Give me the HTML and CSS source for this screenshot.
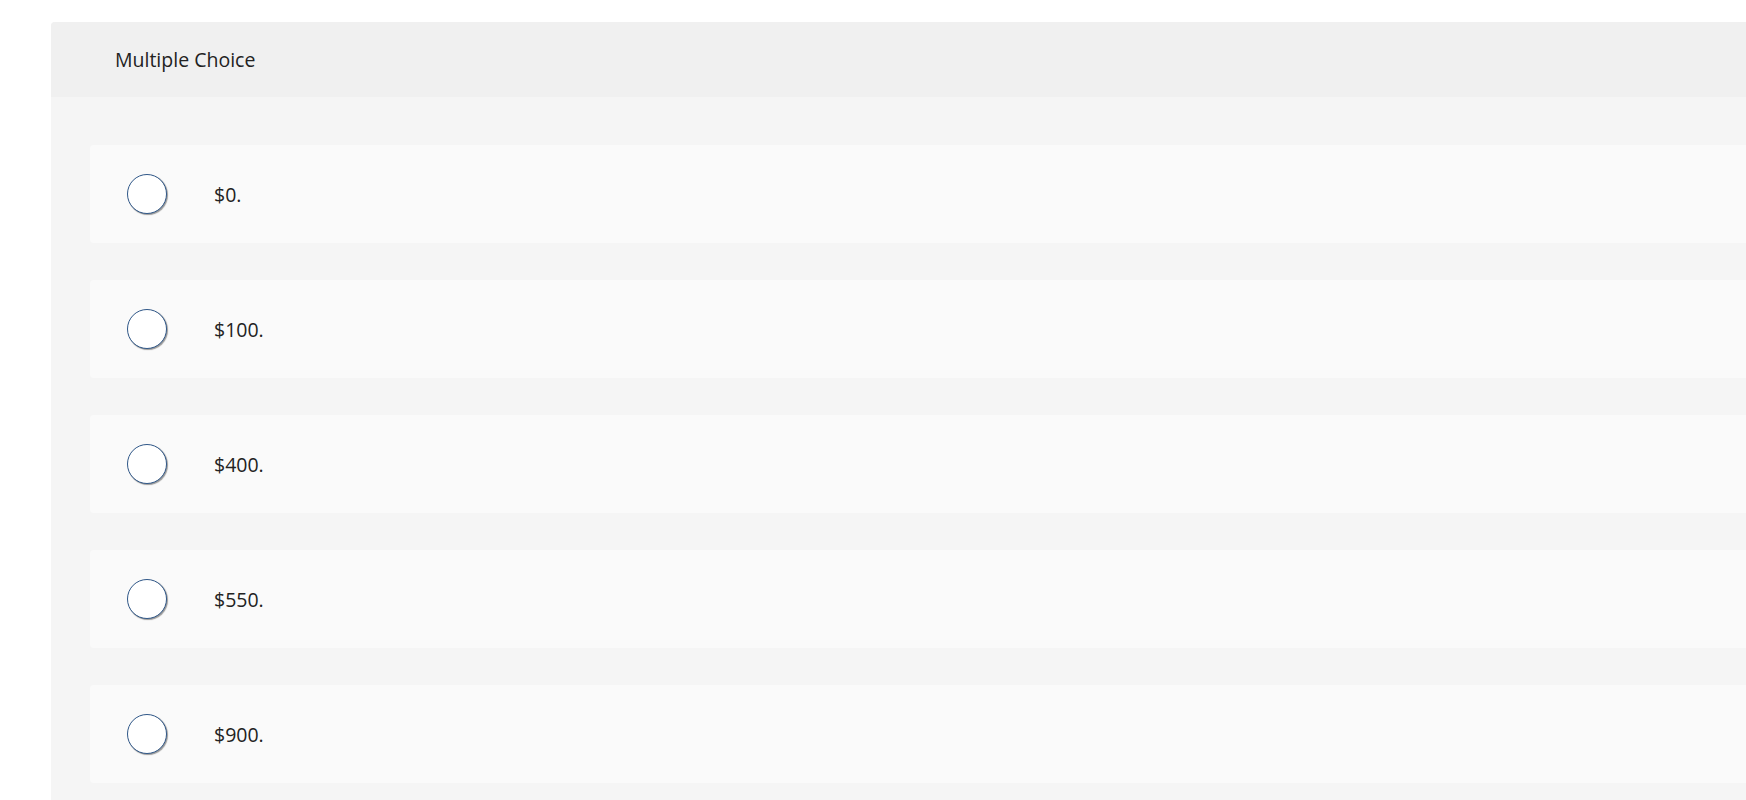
FILE: index.html
```html
<!DOCTYPE html>
<html lang="en">
<head>
    <meta charset="UTF-8">
    <meta name="viewport" content="width=device-width, initial-scale=1.0">
    <title>Multiple Choice</title>
    <link rel="stylesheet" href="styles.css">
</head>
<body>
    <div class="page">
        <div class="question-card">
            <div class="question-header">Multiple Choice</div>
            <div class="question-body">
                <label class="choice">
                    <span class="choice-radio"></span>
                    <span class="choice-text">$0.</span>
                </label>
                <label class="choice">
                    <span class="choice-radio"></span>
                    <span class="choice-text">$100.</span>
                </label>
                <label class="choice">
                    <span class="choice-radio"></span>
                    <span class="choice-text">$400.</span>
                </label>
                <label class="choice">
                    <span class="choice-radio"></span>
                    <span class="choice-text">$550.</span>
                </label>
                <label class="choice">
                    <span class="choice-radio"></span>
                    <span class="choice-text">$900.</span>
                </label>
            </div>
        </div>
    </div>
</body>
</html>
```

FILE: styles.css
```css
html, body {
    margin: 0;
    background: #ffffff;
    overflow: hidden;
}

body {
    font-family: "Open Sans", Lato, Arial, sans-serif;
    font-variant-ligatures: none;
    color: #222222;
}

.page {
    padding: 22px 0 0 51px;
}

.question-card {
    margin-right: -60px;
    border-radius: 4px 0 0 0;
    overflow: hidden;
    background: #f5f5f5;
}

.question-header {
    background: #f0f0f0;
    height: 75px;
    display: flex;
    align-items: center;
    padding-left: 64px;
    font-size: 19.5px;
}

.question-body {
    display: flex;
    flex-direction: column;
    gap: 37px;
    padding: 48px 0 40px 39px;
}

.choice {
    display: flex;
    align-items: center;
    height: 98px;
    padding-left: 37px;
    background: #fafafa;
    border-radius: 4px 0 0 4px;
    cursor: pointer;
}

.choice-radio {
    width: 38px;
    height: 38px;
    border: 1.5px solid #2f5788;
    border-radius: 50%;
    background: #ffffff;
    box-shadow: 1px 1px 1px rgba(0, 0, 0, 0.4);
    flex-shrink: 0;
}

.choice-text {
    margin-left: 47px;
    font-size: 19.5px;
}
```
